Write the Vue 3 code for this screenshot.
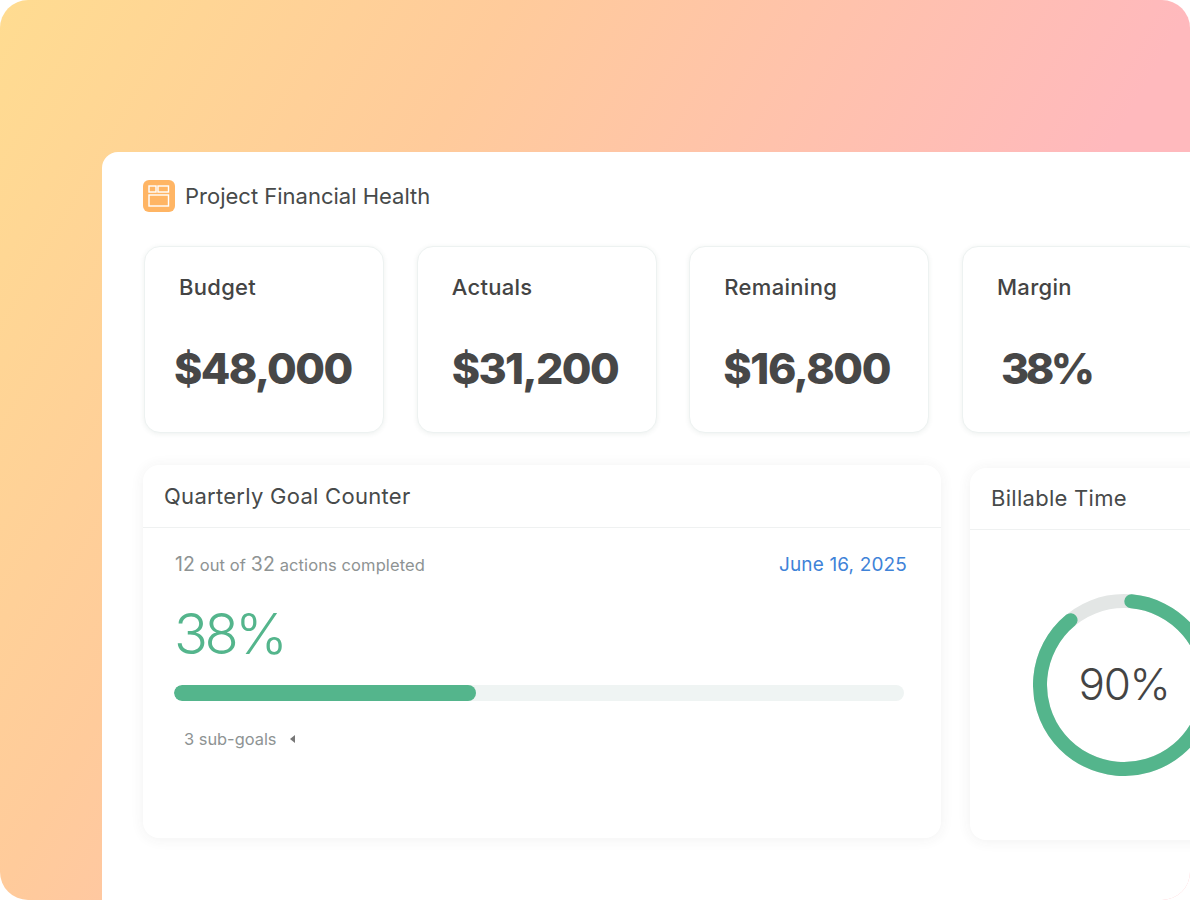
<script setup>
const stats = [
  { label: 'Budget', value: '$48,000', cls: '' },
  { label: 'Actuals', value: '$31,200', cls: 'second' },
  { label: 'Remaining', value: '$16,800', cls: 'third' },
  { label: 'Margin', value: '38%', cls: 'indent' },
]
const r = 84
const c = 2 * Math.PI * r
const dash = `${c * 0.875} ${c}`
</script>

<template>
  <div class="stage">
    <main class="panel">
      <header class="title-row">
        <span class="logo">
          <svg width="32" height="32" viewBox="0 0 32 32" fill="none">
            <rect x="0" y="0" width="32" height="32" rx="6" fill="#FFB564" />
            <rect x="6" y="6" width="7" height="6" stroke="#fff" stroke-width="1.4" fill="none" />
            <rect x="15" y="6" width="10.5" height="6" stroke="#fff" stroke-width="1.4" fill="none" />
            <rect x="6" y="15" width="19.5" height="11" stroke="#fff" stroke-width="1.4" fill="none" />
          </svg>
        </span>
        <h1>Project Financial Health</h1>
      </header>

      <section class="stats">
        <article v-for="s in stats" :key="s.label" class="stat">
          <div class="stat-label">{{ s.label }}</div>
          <div class="stat-value" :class="s.cls">{{ s.value }}</div>
        </article>
      </section>

      <section class="lower">
        <article class="card goal">
          <div class="card-head">Quarterly Goal Counter</div>
          <div class="goal-body">
            <div class="goal-meta">
              <span class="actions"><b>12</b> out of <b>32</b> actions completed</span>
              <span class="date">June 16, 2025</span>
            </div>
            <div class="pct">38%</div>
            <div class="track"><div class="fill"></div></div>
            <div class="sub">
              <span>3 sub-goals</span>
              <i class="caret"></i>
            </div>
          </div>
        </article>

        <article class="card billable">
          <div class="card-head">Billable Time</div>
          <div class="ring-wrap">
            <div class="ring">
              <svg width="182" height="182" viewBox="0 0 182 182" fill="none">
                <circle cx="91" cy="91" :r="r" stroke="#E3E6E5" stroke-width="14" />
                <circle
                  cx="91"
                  cy="91"
                  :r="r"
                  stroke="#54B58C"
                  stroke-width="14"
                  stroke-linecap="round"
                  :stroke-dasharray="dash"
                  transform="rotate(-85 91 91)"
                />
              </svg>
              <span class="ring-text">90%</span>
            </div>
          </div>
        </article>
      </section>
    </main>
  </div>
</template>

<style>
html, body { margin: 0; background: #fff; }
</style>

<style scoped>
.stage {
  width: 1190px;
  height: 900px;
  box-sizing: border-box;
  padding: 152px 0 0 102px;
  border-radius: 28px;
  overflow: hidden;
  background: linear-gradient(120deg, #FFDC91 0%, #FFCB9B 30%, #FFB9BD 70%);
  font-family: "Inter", "Liberation Sans", sans-serif;
  color: #444;
}
.panel {
  height: 748px;
  box-sizing: border-box;
  padding: 28px 0 0 41px;
  background: #fff;
  border-top-left-radius: 16px;
}
.title-row { display: flex; align-items: center; gap: 10px; height: 32px; }
.logo { display: block; width: 32px; height: 32px; }
.logo svg { display: block; }
h1 { margin: 0; font-size: 22px; font-weight: 400; color: #474A4A; }
.stats { display: flex; gap: 32.67px; margin: 34px 0 0 1px; }
.stat {
  flex: none;
  width: 240px;
  height: 187px;
  box-sizing: border-box;
  padding: 25px 0 0 34px;
  background: #fff;
  border: 1px solid #EDF2F1;
  border-radius: 16px;
  box-shadow: 0 1px 5px rgba(60, 90, 80, 0.09);
}
.stat-label { font-size: 22px; font-weight: 500; line-height: 30px; letter-spacing: 0.3px; color: #444; }
.stat-value {
  margin: 38px 0 0 -5px;
  font-size: 43px;
  font-weight: 800;
  line-height: 56px;
  letter-spacing: -1.6px;
  color: #474747;
}
.stat-value.second { margin-left: 0; }
.stat-value.third { margin-left: -1px; letter-spacing: -1.4px; }
.stat-value.indent { margin-left: 4px; letter-spacing: -3.5px; }
.lower { display: flex; align-items: flex-start; gap: 29px; margin-top: 32px; }
.card {
  flex: none;
  background: #fff;
  border-radius: 16px;
  box-shadow: 0 1px 14px rgba(50, 50, 50, 0.07);
}
.goal { width: 798px; height: 373px; }
.billable { width: 300px; height: 372px; margin-top: 3px; }
.card-head {
  height: 63px;
  box-sizing: border-box;
  padding: 0 21px;
  display: flex;
  align-items: center;
  font-size: 22px;
  letter-spacing: 0.28px;
  color: #474A4A;
  border-bottom: 1px solid #EFF1F1;
}
.billable .card-head { height: 62px; padding-bottom: 2px; }
.goal-body { padding: 21px 34px 0 31px; }
.goal-meta { display: flex; justify-content: space-between; align-items: center; height: 30px; }
.actions { margin-left: 1px; font-size: 16.5px; color: #8E9393; letter-spacing: 0.1px; }
.actions b { font-weight: 400; font-size: 19.5px; }
.date { font-size: 19px; color: #3F83D8; letter-spacing: 0.15px; }
.pct { margin-top: 20px; font-size: 56px; font-weight: 300; line-height: 70px; letter-spacing: -3.5px; color: #54B58C; }
.track { margin-top: 16px; width: 730px; height: 16px; border-radius: 8px; background: #EFF4F3; overflow: hidden; }
.fill { width: 302px; height: 16px; border-radius: 8px; background: #54B58C; }
.sub { display: flex; align-items: center; gap: 13px; margin: 26px 0 0 10px; font-size: 16.4px; color: #8E9393; line-height: 24px; }
.caret { width: 0; height: 0; border-style: solid; border-width: 4px 5px 4px 0; border-color: transparent #777 transparent transparent; }
.ring-wrap { padding: 64px 0 0 63px; }
.ring { position: relative; width: 182px; height: 182px; }
.ring svg { display: block; }
.ring-text {
  position: absolute;
  inset: -2px 0 0 0;
  display: flex;
  align-items: center;
  justify-content: center;
  font-size: 44px;
  font-weight: 300;
  letter-spacing: -1.3px;
  color: #444;
}
</style>
